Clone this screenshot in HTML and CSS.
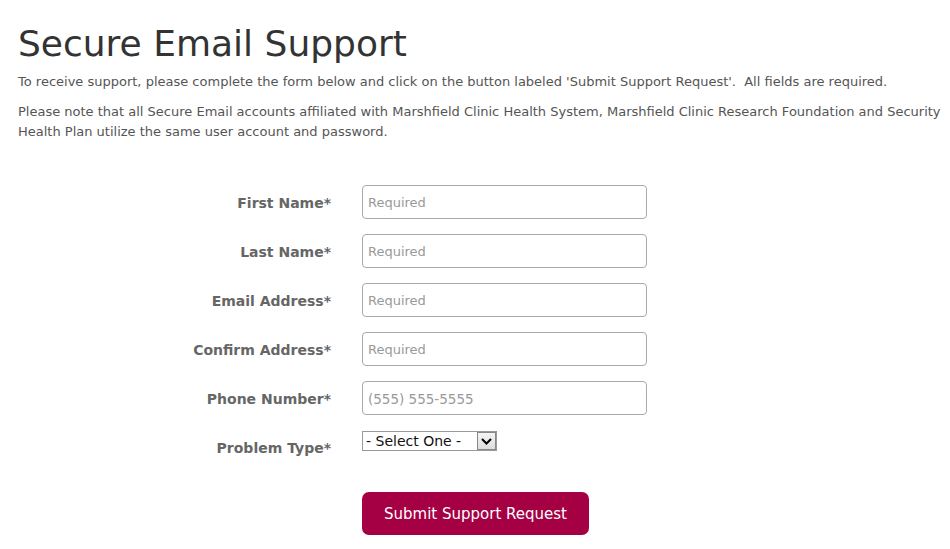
FILE: index.html
```html
<!DOCTYPE html>
<html>
<head>
<meta charset="utf-8">
<title>Secure Email Support</title>
<link rel="stylesheet" href="styles.css">
</head>
<body>
<div class="page">
  <h1 class="title">Secure Email Support</h1>
  <p class="intro">To receive support, please complete the form below and click on the button labeled 'Submit Support Request'.&nbsp; All fields are required.</p>
  <p class="note">Please note that all Secure Email accounts affiliated with Marshfield Clinic Health System, Marshfield Clinic Research Foundation and Security Health Plan utilize the same user account and password.</p>
  <form class="form">
    <div class="row">
      <label class="label" for="fn">First Name*</label>
      <input class="field" id="fn" type="text" placeholder="Required">
    </div>
    <div class="row">
      <label class="label" for="ln">Last Name*</label>
      <input class="field" id="ln" type="text" placeholder="Required">
    </div>
    <div class="row">
      <label class="label" for="em">Email Address*</label>
      <input class="field" id="em" type="text" placeholder="Required">
    </div>
    <div class="row">
      <label class="label" for="ce">Confirm Address*</label>
      <input class="field" id="ce" type="text" placeholder="Required">
    </div>
    <div class="row">
      <label class="label" for="ph">Phone Number*</label>
      <input class="field phone" id="ph" type="text" placeholder="(555) 555-5555">
    </div>
    <div class="row">
      <label class="label" for="pt">Problem Type*</label>
      <div class="select-wrap">
        <select class="select" id="pt">
          <option>- Select One -</option>
        </select>
        <span class="select-arrow"><svg width="13" height="9" viewBox="0 0 13 9"><path d="M2 2 L6.5 6.5 L11 2" fill="none" stroke="#000" stroke-width="2"/></svg></span>
      </div>
    </div>
    <div class="row actions">
      <span class="label"></span>
      <button class="submit" type="button">Submit Support Request</button>
    </div>
  </form>
</div>
</body>
</html>
```
FILE: styles.css
```css
html, body {
  margin: 0;
  padding: 0;
  background: #fff;
}
body {
  font-family: "DejaVu Sans", Verdana, sans-serif;
  color: #555;
}
.page {
  padding: 0 0 0 18px;
}
.title {
  margin: 0;
  padding-top: 22px;
  font-size: 36px;
  font-weight: normal;
  color: #333;
  line-height: 44px;
}
.intro, .note {
  font-size: 13px;
  line-height: 20px;
  margin: 0;
}
.intro {
  margin-top: 6px;
}
.note {
  margin-top: 10px;
  padding-right: 4px;
}
.form {
  margin-top: 43px;
  display: flex;
  flex-direction: column;
  gap: 15px;
}
.row {
  display: flex;
  align-items: flex-start;
  gap: 31px;
}
.label {
  box-sizing: border-box;
  width: 313px;
  text-align: right;
  font-weight: bold;
  font-size: 14px;
  color: #666;
  line-height: 34px;
  height: 34px;
  padding-top: 1px;
}
.field {
  box-sizing: border-box;
  width: 285px;
  height: 34px;
  margin: 0;
  border: 1px solid #aaa;
  border-radius: 4px;
  padding: 1px 5px 0;
  font-family: "DejaVu Sans", Verdana, sans-serif;
  font-size: 13px;
  color: #333;
}
.field::placeholder {
  color: #999;
}
.phone {
  font-size: 13.5px;
}
.select-wrap {
  position: relative;
  width: 135px;
  height: 20px;
  margin-top: 1px;
}
.select {
  appearance: none;
  -webkit-appearance: none;
  box-sizing: border-box;
  width: 135px;
  height: 20px;
  margin: 0;
  border: 1px solid #999;
  border-radius: 0;
  background: #fff;
  padding: 0 0 0 3px;
  font-family: "DejaVu Sans", Verdana, sans-serif;
  font-size: 14px;
  color: #111;
  line-height: 18px;
}
.select-arrow {
  position: absolute;
  right: 1px;
  top: 1px;
  width: 17px;
  height: 16px;
  border: 1px solid #888;
  background: linear-gradient(#f4f4f4, #ddd);
  display: flex;
  align-items: center;
  justify-content: center;
  pointer-events: none;
}
.actions {
  margin-top: 13px;
}
.actions .label {
  height: 43px;
}
.submit {
  width: 227px;
  height: 43px;
  border: 0;
  border-radius: 7px;
  background: #a50044;
  color: #fff;
  font-family: "DejaVu Sans", Verdana, sans-serif;
  font-size: 15px;
  padding: 0;
}
```
